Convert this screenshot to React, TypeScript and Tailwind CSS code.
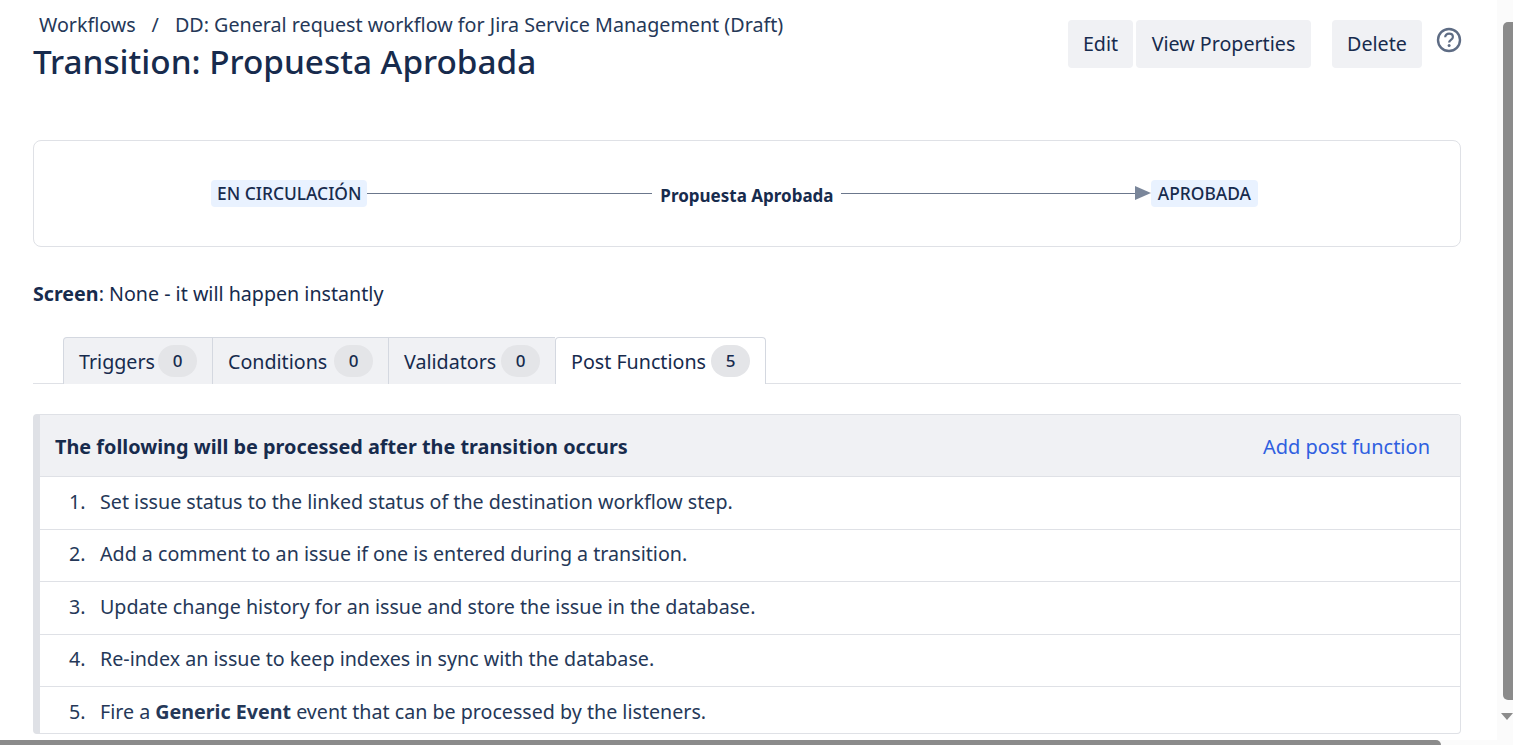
const tabs = [
  { label: "Triggers", count: 0, width: "w-[150px]" },
  { label: "Conditions", count: 0, width: "w-[176px]" },
  { label: "Validators", count: 0, width: "w-[166px]" },
]

function Status({ children, className = "" }: { children: React.ReactNode; className?: string }) {
  return (
    <span className={`h-[27px] rounded-[4px] bg-[#e9f2ff] flex items-center text-[17.4px] font-medium whitespace-nowrap ${className}`}>
      {children}
    </span>
  )
}

function Count({ value }: { value: number }) {
  return (
    <span className="ml-auto w-[39px] h-[32px] -mt-[2px] rounded-full bg-[#e4e5e8] flex items-center justify-center text-[17px] font-medium">
      {value}
    </span>
  )
}

export default function App() {
  return (
    <div className="relative h-[745px] w-[1513px] overflow-hidden bg-white text-[#172b4d] text-[19.66px] font-['Noto_Sans',sans-serif]">
      <div className="ml-[33px] w-[1428px]">
        {/* Header */}
        <div className="flex justify-between h-[140px]">
          <div>
            <div className="pl-[6px] pt-[11px] h-[39px] flex leading-[28px] text-[#253858] whitespace-nowrap">
              <span>Workflows</span>
              <span className="mx-[16px]">/</span>
              <span className="text-[19.72px]">DD: General request workflow for Jira Service Management (Draft)</span>
            </div>
            <h1 className="text-[33.3px] leading-[44px] font-medium whitespace-nowrap">Transition: Propuesta Aprobada</h1>
          </div>
          <div className="flex pt-[20px]">
            <button className="h-[48px] w-[65px] rounded-[4px] bg-[#f0f1f4]">Edit</button>
            <button className="ml-[3px] h-[48px] w-[175px] rounded-[4px] bg-[#f0f1f4]">View Properties</button>
            <button className="ml-[21px] h-[48px] w-[90px] rounded-[4px] bg-[#f0f1f4]">Delete</button>
            <svg className="ml-[14px] -mr-[1px] mt-[7px] w-[26px] h-[26px]" viewBox="0 0 26 26" fill="none">
              <circle cx="13" cy="13" r="11" stroke="#5e6c84" strokeWidth="2.4" />
              <path d="M9.2 10.2c0-2.2 1.7-3.6 3.9-3.6s3.8 1.3 3.8 3.3c0 2.9-3.8 2.9-3.8 5.6" stroke="#5e6c84" strokeWidth="2.2" />
              <circle cx="13.1" cy="18.6" r="1.5" fill="#5e6c84" />
            </svg>
          </div>
        </div>

        {/* Diagram */}
        <div className="h-[107px] rounded-[8px] border border-[#dfe1e6] flex items-center pl-[177px]">
          <div className="flex items-center w-[1047px] -mt-[1px]">
            <Status className="px-[6px]">EN CIRCULACIÓN</Status>
            <span className="h-px w-[285px] bg-[#6b778c]" />
            <span className="w-[189px] text-center text-[17px] font-bold mt-[5px] whitespace-nowrap">Propuesta Aprobada</span>
            <span className="h-px flex-1 bg-[#6b778c]" />
            <span className="border-y-[7px] border-y-transparent border-l-[16px] border-l-[#7a869a]" />
            <Status className="px-[7px]">APROBADA</Status>
          </div>
        </div>

        <p className="mt-[33px] h-[28px] leading-[28px]">
          <b className="font-bold">Screen</b>: None - it will happen instantly
        </p>

        {/* Tabs */}
        <div className="mt-[29px] h-[47px] flex pl-[30px] border-b border-[#dfe1e6]">
          {tabs.map((tab, i) => (
            <div
              key={tab.label}
              className={`${tab.width} h-[47px] pl-[15px] pr-[15px] pt-[2px] flex items-center bg-[#f0f1f4] border-t border-[#d4d8e0] ${i === 0 ? "border-l rounded-tl-[4px]" : ""} ${i < 2 ? "border-r" : ""}`}
            >
              {tab.label}
              <Count value={tab.count} />
            </div>
          ))}
          <div className="w-[211px] h-[47px] pl-[15px] pr-[15px] pt-[2px] flex items-center bg-white border-t border-x border-[#d4d8e0] rounded-t-[4px]">
            Post Functions
            <Count value={5} />
          </div>
        </div>

        {/* Post functions panel */}
        <div className="mt-[30px] h-[320px] rounded-[4px] border border-[#dfe1e6] border-l-[7px] overflow-hidden">
          <div className="h-[61px] pl-[15px] pr-[30px] pt-[2px] flex items-center justify-between bg-[#f0f1f4]">
            <span className="font-bold text-[19.83px]">The following will be processed after the transition occurs</span>
            <a className="text-[20px] text-[#2f5fe0]">Add post function</a>
          </div>
          <ol>
            <Row n={1}>Set issue status to the linked status of the destination workflow step.</Row>
            <Row n={2}>Add a comment to an issue if one is entered during a transition.</Row>
            <Row n={3}>Update change history for an issue and store the issue in the database.</Row>
            <Row n={4}>Re-index an issue to keep indexes in sync with the database.</Row>
            <Row n={5}>
              Fire a <b className="font-bold">Generic Event</b> event that can be processed by the listeners.
            </Row>
          </ol>
        </div>
      </div>

      {/* Browser scrollbars */}
      <div className="absolute right-0 top-0 w-[16px] h-[745px] bg-[#fbfbfb]">
        <div className="absolute right-0 top-[22px] w-[10px] h-[678px] rounded-l-[5px] bg-[#8b8b8b]" />
        <div className="absolute right-0 top-[713px] border-x-[6px] border-x-transparent border-t-[7px] border-t-[#8b8b8b]" />
      </div>
      <div className="absolute left-0 bottom-0 w-[1497px] h-[5px] bg-[#fbfbfb]">
        <div className="w-[1441px] h-[5px] rounded-tr-[5px] bg-[#8b8b8b]" />
      </div>
    </div>
  )
}

function Row({ n, children }: { n: number; children: React.ReactNode }) {
  return (
    <li className="h-[52.6px] pb-[3px] border-t border-[#dfe1e6] flex items-center whitespace-pre text-[#253858]">
      <span className="ml-[29px] w-[31px]">{n}.</span>
      <span>{children}</span>
    </li>
  )
}
